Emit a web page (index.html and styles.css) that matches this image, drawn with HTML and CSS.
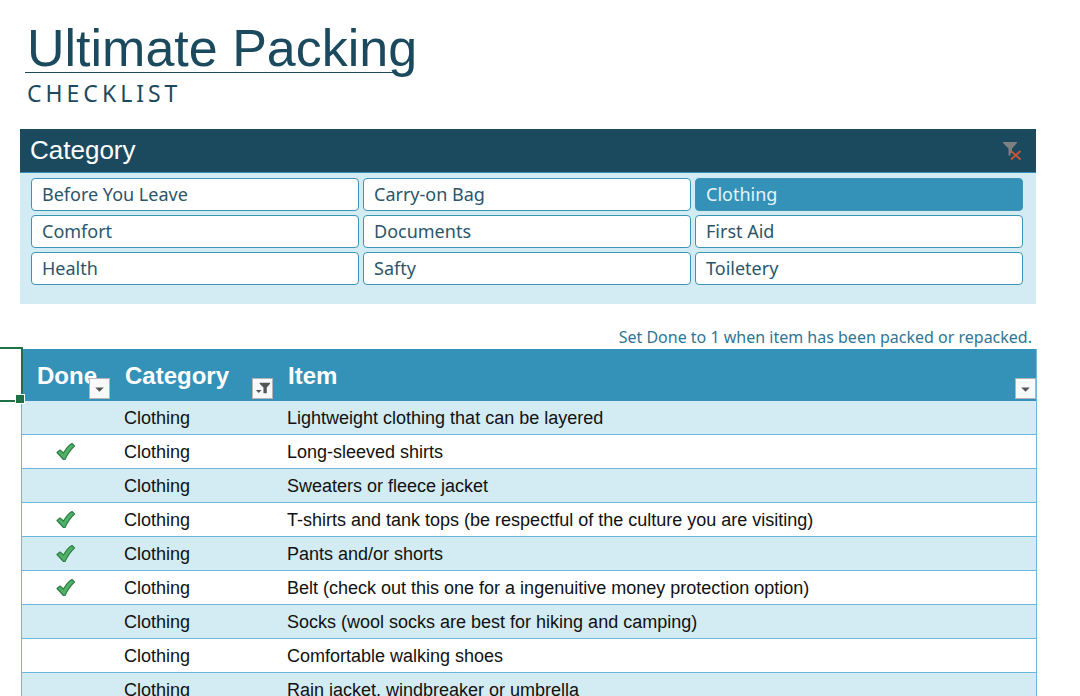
FILE: index.html
```html
<!DOCTYPE html>
<html lang="en">
  <head>
    <meta charset="UTF-8" />
    <meta name="viewport" content="width=device-width, initial-scale=1.0" />
    <title>Ultimate Packing Checklist</title>
    <link rel="stylesheet" href="styles.css">
  </head>
  <body>
    <!-- shared icons -->
    <svg class="icons" aria-hidden="true">
      <symbol id="check" viewBox="0 0 20 20">
        <path d="M1 10.500 L4 8 L7.500 11 C9.500 7.500 12.500 3.500 16 1.500 L18.500 4 C14.500 7.500 11.500 12 9 17.500 L7.500 17.500 Z" fill="#4fb268" stroke="#2f7d44" stroke-width="1.200" stroke-linejoin="round" />
      </symbol>
      <symbol id="arrow" viewBox="0 0 20 20">
        <path d="M5.500 9 H14.500 L10 13.500 Z" fill="#555" />
      </symbol>
      <symbol id="filtered" viewBox="0 0 20 20">
        <path d="M7 4 H18 V5 L14.500 9 V15 H11 V9 L7 5 Z" fill="#555" />
        <path d="M3 11.500 H9 L6 14.800 Z" fill="#555" />
      </symbol>
    </svg>

    <header>
      <h1>Ultimate Packing</h1>
      <p class="subtitle">CHECKLIST</p>
    </header>

    <main>
      <section class="slicer">
        <div class="slicer-header">
          <h2>Category</h2>
          <button class="clear" aria-label="Clear filter">
            <svg viewBox="0 0 20 20">
              <path d="M1 1 H15 V2 L10 7.500 V12 H8.500 V14.500 H6.500 V7.500 L1 2 Z" fill="#7d7f80" />
              <path d="M9 10 L18.500 18.500 M18.500 10 L9 18.500" stroke="#c8553a" stroke-width="2" fill="none" />
            </svg>
          </button>
        </div>
        <div class="slicer-items">
          <button>Before You Leave</button>
          <button>Carry-on Bag</button>
          <button class="selected">Clothing</button>
          <button>Comfort</button>
          <button>Documents</button>
          <button>First Aid</button>
          <button>Health</button>
          <button>Safty</button>
          <button>Toiletery</button>
        </div>
      </section>

      <p class="note">Set Done to 1 when item has been packed or repacked.</p>

      <div class="sheet">
        <table>
          <thead>
            <tr>
              <th class="done">Done<button class="filter" aria-label="Filter Done"><svg><use href="#arrow" /></svg></button></th>
              <th class="category">Category<button class="filter" aria-label="Filter Category"><svg><use href="#filtered" /></svg></button></th>
              <th>Item<button class="filter" aria-label="Filter Item"><svg><use href="#arrow" /></svg></button></th>
            </tr>
          </thead>
          <tbody>
            <tr>
              <td></td>
              <td>Clothing</td>
              <td>Lightweight clothing that can be layered</td>
            </tr>
            <tr>
              <td><svg class="check" role="img" aria-label="Done"><use href="#check" /></svg></td>
              <td>Clothing</td>
              <td>Long-sleeved shirts</td>
            </tr>
            <tr>
              <td></td>
              <td>Clothing</td>
              <td>Sweaters or fleece jacket</td>
            </tr>
            <tr>
              <td><svg class="check" role="img" aria-label="Done"><use href="#check" /></svg></td>
              <td>Clothing</td>
              <td>T-shirts and tank tops (be respectful of the culture you are visiting)</td>
            </tr>
            <tr>
              <td><svg class="check" role="img" aria-label="Done"><use href="#check" /></svg></td>
              <td>Clothing</td>
              <td>Pants and/or shorts</td>
            </tr>
            <tr>
              <td><svg class="check" role="img" aria-label="Done"><use href="#check" /></svg></td>
              <td>Clothing</td>
              <td>Belt (check out this one for a ingenuitive money protection option)</td>
            </tr>
            <tr>
              <td></td>
              <td>Clothing</td>
              <td>Socks (wool socks are best for hiking and camping)</td>
            </tr>
            <tr>
              <td></td>
              <td>Clothing</td>
              <td>Comfortable walking shoes</td>
            </tr>
            <tr>
              <td></td>
              <td>Clothing</td>
              <td>Rain jacket, windbreaker or umbrella</td>
            </tr>
          </tbody>
        </table>
        <div class="active-cell"></div>
      </div>
    </main>
  </body>
</html>
```

FILE: styles.css
```css
* {
  margin: 0;
  padding: 0;
  box-sizing: border-box;
}

body {
  font-family: "Liberation Sans", Arial, sans-serif;
  background-color: #fff;
  color: #111;
  padding: 24px 44px 0 20px;
}

button {
  cursor: pointer;
}

.icons {
  display: none;
}

/* Title */
header {
  height: 105px;
  padding-left: 5px;
  color: #1b4a5e;
}

h1 {
  width: 372px;
  padding-left: 2px;
  font-size: 52px;
  font-weight: normal;
  line-height: 48px;
  white-space: nowrap;
  border-bottom: 1px solid #1b4a5e;
}

.subtitle {
  font-family: "Noto Sans", sans-serif;
  font-size: 23px;
  line-height: 40px;
  letter-spacing: 4px;
  padding-left: 2px;
}

/* Category slicer */
.slicer {
  background-color: #d3ebf2;
}

.slicer-header {
  display: flex;
  justify-content: space-between;
  align-items: center;
  height: 44px;
  padding: 0 14px 0 10px;
  background-color: #1b4a5e;
  border-bottom: 1px solid #3492b8;
}

.slicer-header h2 {
  color: #fff;
  font-size: 26px;
  font-weight: normal;
}

.clear {
  width: 20px;
  height: 20px;
  border: none;
  background: none;
}

.clear svg {
  display: block;
  width: 20px;
  height: 20px;
}

.slicer-items {
  display: grid;
  grid-template-columns: repeat(3, 1fr);
  gap: 4px;
  padding: 5px 13px 19px 11px;
}

.slicer-items button {
  height: 33px;
  padding: 0 10px 2px;
  font-family: "Noto Sans", sans-serif;
  font-size: 18px;
  text-align: left;
  color: #2b566a;
  background-color: #fff;
  border: 1px solid #3d95b6;
  border-radius: 4px;
}

.slicer-items .selected {
  color: #e4f4fa;
  background-color: #3492b8;
}

.note {
  margin-top: 21px;
  padding-right: 4px;
  font-family: "Noto Sans", sans-serif;
  font-size: 16px;
  line-height: 24px;
  text-align: right;
  color: #2f7594;
}

/* Checklist table */
.sheet {
  position: relative;
  margin-right: -1px;
  padding-left: 1px;
}

table {
  width: 100%;
  table-layout: fixed;
  border-collapse: separate;
  border-spacing: 0;
  border-left: 1px solid #6cb8dc;
  border-right: 1px solid #6cb8dc;
}

th {
  position: relative;
  height: 52px;
  padding: 2px 15px 0;
  font-size: 24px;
  text-align: left;
  color: #fff;
  background-color: #3492b8;
}

.done {
  width: 88px;
}

.category {
  width: 163px;
}

td {
  height: 34px;
  padding: 2px 14px 0;
  font-size: 18px;
  border-bottom: 1px solid #6cb8dc;
}

tbody tr:nth-child(odd) {
  background-color: #d3ebf2;
}

td:first-child {
  padding-top: 0;
  text-align: center;
}

.check {
  display: inline-block;
  width: 20px;
  height: 20px;
  vertical-align: middle;
}

.filter {
  position: absolute;
  right: 0;
  bottom: 2px;
  width: 21px;
  height: 21px;
  border: 1px solid #b5b5b5;
  background-color: #f8f9fb;
}

.filter svg {
  display: block;
  width: 19px;
  height: 19px;
}

/* Selected cell to the left of the table */
.active-cell {
  position: absolute;
  left: -20px;
  top: -2px;
  width: 23px;
  height: 55px;
  border: 2px solid #1f7145;
  border-left: none;
}

.active-cell::after {
  content: "";
  position: absolute;
  right: -4px;
  bottom: -4px;
  width: 8px;
  height: 8px;
  background-color: #1f7145;
  border: 1px solid #fff;
}
```
